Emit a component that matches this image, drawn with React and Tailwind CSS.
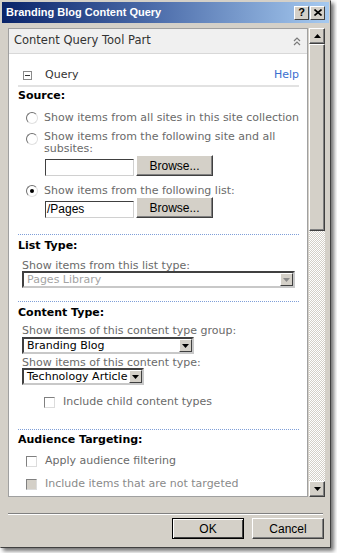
import React from 'react';

const ui = { fontFamily: '"DejaVu Sans", Verdana, sans-serif' };
const sys = { fontFamily: '"Liberation Sans", Arial, sans-serif' };

function Radio({ checked }) {
  return (
    <span className="relative inline-block w-[12px] h-[12px] shrink-0 rounded-full bg-white border border-t-[#707070] border-l-[#707070] border-r-[#e0e0e0] border-b-[#e0e0e0]">
      {checked && <span className="absolute left-[3px] top-[3px] w-[4px] h-[4px] rounded-full bg-black" />}
    </span>
  );
}

function Check({ disabled }) {
  return (
    <span
      className={`inline-block w-[11px] h-[11px] shrink-0 border border-t-[#808080] border-l-[#808080] border-r-[#dcdcdc] border-b-[#dcdcdc] ${
        disabled ? 'bg-[#d4d0c8]' : 'bg-white'
      }`}
    />
  );
}

function Arrow({ down = true, color = '#000' }) {
  return (
    <svg width="7" height="4" viewBox="0 0 7 4">
      {down ? <path d="M0 0h7L3.5 4z" fill={color} /> : <path d="M0 4h7L3.5 0z" fill={color} />}
    </svg>
  );
}

function Select({ width, value, disabled }) {
  return (
    <div
      className={`flex items-center h-[17px] border-2 border-t-[#404040] border-l-[#404040] border-r-[#c8c8c8] border-b-[#c8c8c8] bg-white ${width}`}
    >
      <span className={`flex-1 pl-[3px] text-[11px] leading-none whitespace-nowrap overflow-hidden ${disabled ? 'text-[#a3a3a3]' : 'text-black'}`}>
        {value}
      </span>
      <span className="w-[13px] h-[13px] flex items-center justify-center bg-[#d4d0c8] border border-t-white border-l-white border-r-[#404040] border-b-[#404040]">
        <Arrow color={disabled ? '#8a8a8a' : '#000'} />
      </span>
    </div>
  );
}

function BrowseRow({ value }) {
  return (
    <div className="flex items-end pl-[27px]">
      <div className="w-[89px] h-[17px] bg-white border border-t-[#404040] border-l-[#404040] border-r-[#d0d0d0] border-b-[#d0d0d0] text-[12px] leading-[15px] pl-[1px] text-black" style={sys}>
        {value}
      </div>
      <button className="ml-[2px] w-[77px] h-[21px] bg-[#d4d0c8] border border-t-white border-l-white border-r-[#404040] border-b-[#404040] shadow-[inset_-1px_-1px_0_#808080] text-[12px] text-black" style={sys}>
        Browse...
      </button>
    </div>
  );
}

function Dotted() {
  return <div className="border-t border-dotted border-[#7f9fd8]" />;
}

export default function App() {
  return (
    <div className="w-[337px] h-[553px] bg-white overflow-hidden" style={ui}>
      <div className="w-[331px] h-[548px] flex flex-col bg-[#d4d0c8] border border-t-[#d4d0c8] border-l-[#d4d0c8] border-r-[#404040] border-b-[#404040] shadow-[3px_3px_4px_rgba(0,0,0,0.55)]">
        {/* Title bar */}
        <div className="mx-[1px] mt-[1px] h-[21px] flex items-center pl-[4px] pr-[4px] bg-[linear-gradient(to_right,#0a246a,#4a6aa8_45%,#a6caf0)]">
          <span className="flex-1 text-white font-bold text-[11px]" style={sys}>
            Branding Blog Content Query
          </span>
          <button className="w-[15px] h-[14px] flex items-center justify-center bg-[#d4d0c8] border border-t-white border-l-white border-r-[#404040] border-b-[#404040] text-[11px] font-bold text-black leading-none" style={sys}>
            ?
          </button>
          <button className="ml-[1px] w-[15px] h-[14px] flex items-center justify-center bg-[#d4d0c8] border border-t-white border-l-white border-r-[#404040] border-b-[#404040] text-black">
            <svg width="8" height="7" viewBox="0 0 8 7">
              <path d="M0.5 0.5l7 6M7.5 0.5l-7 6" stroke="#000" strokeWidth="1.6" />
            </svg>
          </button>
        </div>

        {/* Body */}
        <div className="flex mt-[5px] pl-[7px] h-[469px]">
          {/* Tool part */}
          <div className="w-[300px] h-full bg-white border border-[#a0a0a0] overflow-hidden">
            <div className="h-[25px] flex items-center justify-between pl-[5px] pr-[6px] bg-[#f0f0f0] border-b border-[#d8d8d8]">
              <span className="text-[11.5px] text-[#333]">Content Query Tool Part</span>
              <svg width="8" height="9" viewBox="0 0 8 9">
                <path d="M1 4l3-3 3 3M1 8l3-3 3 3" stroke="#7a7a7a" strokeWidth="1.2" fill="none" />
              </svg>
            </div>

            <div className="pl-[9px] pr-[8px]">
              <div className="mt-[11px] h-[20px] flex items-center">
                <span className="ml-[5px] w-[9px] h-[9px] border border-[#8a8a8a] flex items-center justify-center">
                  <span className="w-[5px] h-px bg-[#333]" />
                </span>
                <span className="ml-[13px] flex-1 text-[11px] text-[#333]">Query</span>
                <span className="text-[11px] text-[#3a6fcf]">Help</span>
              </div>
              <div className="border-t-2 border-[#e2e2e2]" />

              <div className="mt-[2px] text-[11px] font-bold text-black leading-[14px]">Source:</div>

              <div className="mt-[8px] flex items-center gap-[6px] pl-[8px] text-[11px] text-[#6a6a6a] leading-[14px]">
                <Radio />
                <span className="whitespace-nowrap">Show items from all sites in this site collection</span>
              </div>

              <div className="mt-[6px] flex items-start gap-[6px] pl-[8px] text-[11px] text-[#6a6a6a] leading-[12px]">
                <span className="mt-[2px]"><Radio /></span>
                <span>
                  Show items from the following site and all
                  <br />
                  subsites:
                </span>
              </div>
              <BrowseRow value="" />

              <div className="mt-[8px] flex items-center gap-[6px] pl-[8px] text-[11px] text-[#6a6a6a] leading-[14px]">
                <Radio checked />
                <span>Show items from the following list:</span>
              </div>
              <div className="mt-[-1px]">
                <BrowseRow value="/Pages" />
              </div>

              <div className="mt-[16px]"><Dotted /></div>

              <div className="mt-[4px] text-[11px] font-bold text-black leading-[14px]">List Type:</div>
              <div className="mt-[7px] pl-[4px] text-[11px] text-[#6a6a6a] leading-[11px]">Show items from this list type:</div>
              <div className="pl-[4px]">
                <Select width="w-[273px]" value="Pages Library" disabled />
              </div>

              <div className="mt-[13px]"><Dotted /></div>

              <div className="mt-[4px] text-[11px] font-bold text-black leading-[14px]">Content Type:</div>
              <div className="mt-[5px] pl-[4px] text-[11px] text-[#6a6a6a] leading-[11px]">Show items of this content type group:</div>
              <div className="mt-[1px] pl-[4px]">
                <Select width="w-[172px]" value="Branding Blog" />
              </div>
              <div className="mt-[3px] pl-[4px] text-[11px] text-[#6a6a6a] leading-[11px]">Show items of this content type:</div>
              <div className="pl-[4px]">
                <Select width="w-[122px]" value="Technology Article" />
              </div>

              <div className="mt-[10px] flex items-center gap-[8px] pl-[26px] text-[11px] text-[#6a6a6a] leading-[14px]">
                <Check />
                <span>Include child content types</span>
              </div>

              <div className="mt-[20px]"><Dotted /></div>

              <div className="mt-[3px] text-[11px] font-bold text-black leading-[14px]">Audience Targeting:</div>
              <div className="mt-[7px] flex items-center gap-[8px] pl-[8px] text-[11px] text-[#6a6a6a] leading-[14px]">
                <Check />
                <span>Apply audience filtering</span>
              </div>
              <div className="mt-[9px] flex items-center gap-[8px] pl-[8px] text-[11px] text-[#8a8a8a] leading-[14px]">
                <Check disabled />
                <span>Include items that are not targeted</span>
              </div>
            </div>
          </div>

          {/* Scrollbar */}
          <div className="ml-[1px] w-[16px] h-full flex flex-col bg-[#ebe9e4] bg-[repeating-conic-gradient(#ffffff_0_25%,#d4d0c8_0_50%)] bg-[length:2px_2px]">
            <div className="h-[16px] flex items-center justify-center bg-[#d4d0c8] border border-t-white border-l-white border-r-[#404040] border-b-[#404040] shadow-[inset_-1px_-1px_0_#808080]">
              <Arrow down={false} />
            </div>
            <div className="h-[187px] bg-[#d4d0c8] border border-t-white border-l-white border-r-[#404040] border-b-[#404040] shadow-[inset_-1px_-1px_0_#808080]" />
            <div className="flex-1" />
            <div className="h-[16px] flex items-center justify-center bg-[#d4d0c8] border border-t-white border-l-white border-r-[#404040] border-b-[#404040] shadow-[inset_-1px_-1px_0_#808080]">
              <Arrow />
            </div>
          </div>
        </div>

        {/* Footer */}
        <div className="mt-[16px] mx-[7px] border-t border-b border-t-[#808080] border-b-white" />
        <div className="mt-[3px] flex justify-end gap-[8px] pr-[6px]">
          <button className="w-[72px] h-[21px] bg-[#d4d0c8] border border-black shadow-[inset_1px_1px_0_#ffffff,inset_-1px_-1px_0_#404040] text-[12px] text-black" style={sys}>
            OK
          </button>
          <button className="w-[72px] h-[21px] bg-[#d4d0c8] border border-t-white border-l-white border-r-[#404040] border-b-[#404040] shadow-[inset_-1px_-1px_0_#808080] text-[12px] text-black" style={sys}>
            Cancel
          </button>
        </div>
      </div>
    </div>
  );
}
